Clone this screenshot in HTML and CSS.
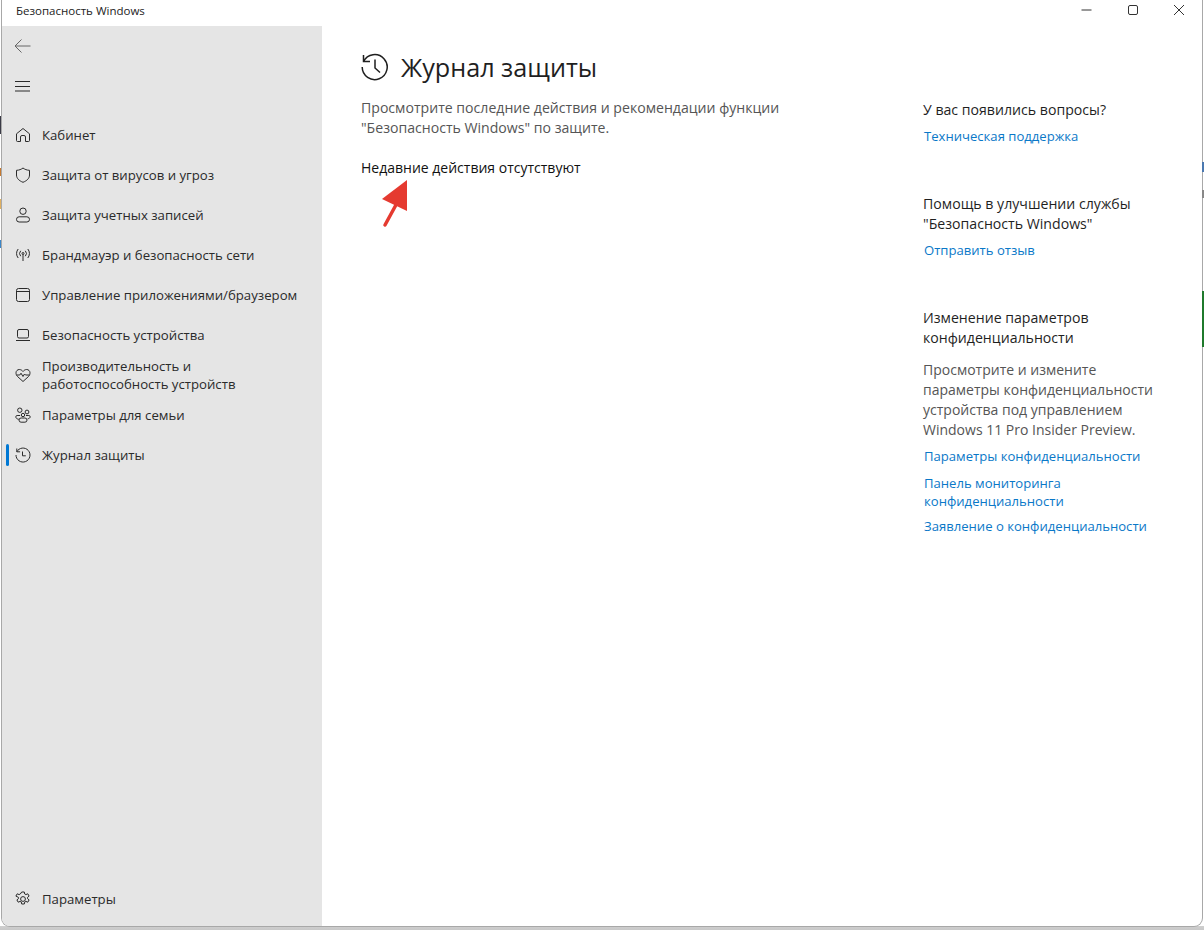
FILE: index.html
```html
<!DOCTYPE html>
<html lang="ru">
<head>
<meta charset="utf-8">
<title>Безопасность Windows</title>
<link rel="stylesheet" href="styles.css">
</head>
<body>
<div class="desk-bit b1"></div>
<div class="desk-bit b2"></div>
<div class="desk-bit b3"></div>
<div class="desk-bit b4"></div>
<div class="desk-bit b5"></div>
<div class="desk-bit b6"></div>
<div class="desk-bit b7"></div>
<div class="window">
  <header class="titlebar">
    <span class="app-title">Безопасность Windows</span>
    <div class="controls">
      <svg class="ctl" viewBox="0 0 46 20"><path d="M17.500 10h10"/></svg>
      <svg class="ctl" viewBox="0 0 46 20"><rect x="18.500" y="5.500" width="9" height="9" rx="1.500"/></svg>
      <svg class="ctl" viewBox="0 0 46 20"><path d="M18 5l10 10M28 5L18 15"/></svg>
    </div>
  </header>
  <div class="body">
    <aside class="sidebar">
      <div class="side-top">
        <svg class="ico back" viewBox="0 0 20 20"><path d="M16.500 10H1M7.500 3.500L1 10l6.500 6.500"/></svg>
        <svg class="ico burger" viewBox="0 0 20 20"><path d="M1 5.500h15M1 10.500h15M1 15h15"/></svg>
      </div>
      <nav class="nav">
        <a class="item"><svg class="ico" viewBox="0 0 16 16"><path d="M1.500 13.500V6.800L8 1.500l6.500 5.300v6.700a1 1 0 0 1-1 1H10.500V10a1.500 1.500 0 0 0-1.500-1.500H7A1.500 1.500 0 0 0 5.500 10v4.500h-3a1 1 0 0 1-1-1z"/></svg><span>Кабинет</span></a>
        <a class="item"><svg class="ico" viewBox="0 0 16 16"><path d="M8 1c1.800 1.400 3.800 2.200 6.500 2.300V8c0 3.300-2.500 5.700-6.500 7.300C4 13.700 1.500 11.300 1.500 8V3.300C4.200 3.200 6.200 2.400 8 1z"/></svg><span>Защита от вирусов и угроз</span></a>
        <a class="item"><svg class="ico" viewBox="0 0 16 16"><circle cx="8" cy="4.200" r="3.200"/><rect x="1.500" y="9.800" width="13" height="5.200" rx="2.600"/></svg><span>Защита учетных записей</span></a>
        <a class="item"><svg class="ico" viewBox="0 0 16 16"><circle cx="8" cy="6.500" r="1"/><path d="M8 7.500V14M5.700 3.800a4 4 0 0 0 0 5.400M10.300 3.800a4 4 0 0 1 0 5.400M3.200 2a7 7 0 0 0 0 9M12.800 2a7 7 0 0 1 0 9"/></svg><span>Брандмауэр и безопасность сети</span></a>
        <a class="item"><svg class="ico" viewBox="0 0 16 16"><rect x="1.500" y="1.500" width="13" height="13" rx="2"/><path d="M1.500 4.500h13"/></svg><span>Управление приложениями/браузером</span></a>
        <a class="item"><svg class="ico" viewBox="0 0 16 16"><rect x="2.500" y="2.500" width="11" height="8.500" rx="1.500"/><path d="M1 13.500h14"/></svg><span>Безопасность устройства</span></a>
        <a class="item"><svg class="ico" viewBox="0 0 16 16"><path d="M2.500 9.500C1.300 8.300 1 7 1 5.800 1 4 2.500 2.500 4.300 2.500c1.500 0 2.800.8 3.700 2 .9-1.200 2.200-2 3.700-2C13.500 2.500 15 4 15 5.800c0 1.200-.3 2.500-1.500 3.700L8 14.500z"/><path d="M1.500 8h3.300l1.200-1.800 2 3.300L9.500 7l1 1h4"/></svg><span>Производительность и<br>работоспособность устройств</span></a>
        <a class="item"><svg class="ico" viewBox="0 0 16 16"><circle cx="4.800" cy="3.200" r="2.200"/><circle cx="12" cy="5" r="1.900"/><circle cx="8" cy="8" r="1.700"/><path d="M3.800 12.300c-1.700-.2-3-1.100-3-2.500 0-.8.6-1.300 1.300-1.300h3M11 8.500h2.800c.8 0 1.400.5 1.400 1.300 0 1-1 1.800-2.500 2"/><rect x="4" y="11" width="8" height="4.200" rx="2.100"/></svg><span>Параметры для семьи</span></a>
        <a class="item active"><svg class="ico" viewBox="0 0 16 16"><path d="M1.800 1.500v3.300h3.300M1.800 4.800A7 7 0 1 1 1 8"/><path d="M7.500 4.500v4.300h3.300"/></svg><span>Журнал защиты</span></a>
      </nav>
      <a class="item settings"><svg class="ico" viewBox="0 0 16 16"><circle cx="8" cy="8" r="2.400"/><path d="M6.700 1h2.600l.4 2 1.200.6 1.900-.8 1.300 2.300-1.600 1.300v1.200l1.600 1.300-1.300 2.300-1.900-.8-1.200.7-.4 1.900H6.700l-.4-2-1.200-.6-1.900.8-1.300-2.300 1.600-1.300V6.400L.9 5.100l1.300-2.300 1.900.8 1.200-.6z"/></svg><span>Параметры</span></a>
    </aside>
    <main class="main">
      <section class="content">
        <div class="heading">
          <svg class="hist" viewBox="0 0 28 28"><path d="M2.500 2v6.500H9M2.500 8.500A12.500 12.500 0 1 1 1.200 14"/><path d="M14 6.500V15l5 4.500"/></svg>
          <h1>Журнал защиты</h1>
        </div>
        <p class="intro">Просмотрите последние действия и рекомендации функции<br>"Безопасность Windows" по защите.</p>
        <p class="empty">Недавние действия отсутствуют</p>
      </section>
      <aside class="help">
        <section class="block first">
          <h2>У вас появились вопросы?</h2>
          <a class="link">Техническая поддержка</a>
        </section>
        <section class="block second">
          <h2>Помощь в улучшении службы<br>"Безопасность Windows"</h2>
          <a class="link">Отправить отзыв</a>
        </section>
        <section class="block third">
          <h2>Изменение параметров<br>конфиденциальности</h2>
          <p class="note">Просмотрите и измените<br>параметры конфиденциальности<br>устройства под управлением<br>Windows 11 Pro Insider Preview.</p>
          <a class="link l1">Параметры конфиденциальности</a>
          <a class="link l2">Панель мониторинга<br>конфиденциальности</a>
          <a class="link l3">Заявление о конфиденциальности</a>
        </section>
      </aside>
      <svg class="arrow" viewBox="0 0 50 60"><path class="shaft" d="M5 49L17 27"/><path class="head" d="M27 4L2 23 27 35z"/></svg>
    </main>
  </div>
</div>
</body>
</html>
```

FILE: styles.css
```css
* { box-sizing: border-box; }
html, body { margin: 0; height: 100%; }
body {
  position: relative;
  width: 1204px;
  height: 930px;
  overflow: hidden;
  background: linear-gradient(#fff 926px, #cfcfcf 926px, #c8c8c8);
  padding: 0 2px 4px 2px;
  font-family: "Open Sans", "Noto Sans", sans-serif;
  font-size: 13.200px;
  color: #1f1f1f;
}
.desk-bit { position: absolute; z-index: 1; width: 1px; }
.b1 { right: 0; width: 2px; top: 162px; height: 10px; background: #4a78b0; }
.b2 { right: 0; width: 2px; top: 190px; height: 8px; background: #888; }
.b3 { right: 0; width: 2px; top: 291px; height: 56px; background: #1f7a2c; }
.b4 { left: 0; top: 116px; height: 18px; background: #3b3b46; }
.b5 { left: 0; top: 168px; height: 8px; background: #c77a30; }
.b6 { left: 0; top: 199px; height: 10px; background: #e0b060; }
.b7 { left: 0; top: 240px; height: 8px; background: #3a86c8; }
.window {
  position: relative;
  width: 1200px;
  height: 926px;
  background: #fff;
  display: flex;
  flex-direction: column;
  border-radius: 0 0 8px 8px;
  overflow: hidden;
  box-shadow: 0 0 0 1px #a8a8a8;
}
.titlebar {
  height: 26px;
  flex: none;
  display: flex;
  align-items: flex-start;
  justify-content: space-between;
  padding-left: 14px;
}
.app-title {
  font-size: 11.500px;
  line-height: 22px;
  color: #222;
}
.controls { display: flex; }
.ctl {
  width: 46px;
  height: 20px;
  fill: none;
  stroke: #333;
  stroke-width: 1;
}
.body { flex: 1; display: flex; min-height: 0; }
.sidebar {
  width: 320px;
  flex: none;
  background: #e5e5e5;
  display: flex;
  flex-direction: column;
}
.side-top {
  height: 89px;
  display: flex;
  flex-direction: column;
  padding: 10px 0 0 12px;
  gap: 20px;
}
.ico {
  width: 16px;
  height: 16px;
  flex: none;
  fill: none;
  stroke: #2b2b2b;
  stroke-width: 1;
}
.back, .burger { width: 20px; height: 20px; }
.back { stroke: #666; }
.nav { display: flex; flex-direction: column; }
.item {
  position: relative;
  height: 40px;
  display: flex;
  align-items: center;
  gap: 11px;
  padding-left: 13px;
  line-height: 18px;
  color: #2a2a2a;
}
.item.active::before {
  content: "";
  position: absolute;
  left: 4px;
  top: 9px;
  width: 2.500px;
  height: 22px;
  background: #0078d4;
  border-radius: 2px;
}
.settings { margin-top: auto; margin-bottom: 7px; }
.main {
  flex: 1;
  position: relative;
  display: flex;
  justify-content: space-between;
  padding-left: 39px;
}
.content { width: 500px; }
.heading {
  display: flex;
  align-items: center;
  gap: 12px;
  height: 36px;
  margin-top: 23px;
}
.hist {
  width: 28px;
  height: 28px;
  fill: none;
  stroke: #1f1f1f;
  stroke-width: 1.500;
}
h1 {
  margin: 0;
  font-size: 25.200px;
  font-weight: 400;
  color: #1f1f1f;
}
.intro {
  margin: 13px 0 0;
  font-size: 14.100px;
  line-height: 20px;
  color: #555;
}
.empty {
  margin: 20px 0 0;
  font-size: 14px;
  line-height: 20px;
  color: #111;
}
.help { width: 279px; padding-top: 74px; }
.block { display: flex; flex-direction: column; align-items: flex-start; }
h2 {
  margin: 0;
  font-size: 14.130px;
  font-weight: 400;
  line-height: 20.500px;
  color: #1f1f1f;
}
.link { color: #0a78c8; font-size: 13.100px; line-height: 19px; padding-left: 1px; }
.first .link { margin-top: 6px; }
.second { margin-top: 48px; }
.second .link { margin-top: 6px; }
.third { margin-top: 48px; }
.note { margin: 11px 0 0; font-size: 14px; line-height: 20px; color: #555; }
.l1 { margin-top: 7px; }
.l2 { margin-top: 8px; line-height: 18px; }
.l3 { margin-top: 7px; }
.arrow {
  position: absolute;
  left: 58px;
  top: 150px;
  width: 50px;
  height: 60px;
}
.shaft { fill: none; stroke: #e53a30; stroke-width: 3.500; stroke-linecap: round; }
.head { fill: #e53a30; }
```
